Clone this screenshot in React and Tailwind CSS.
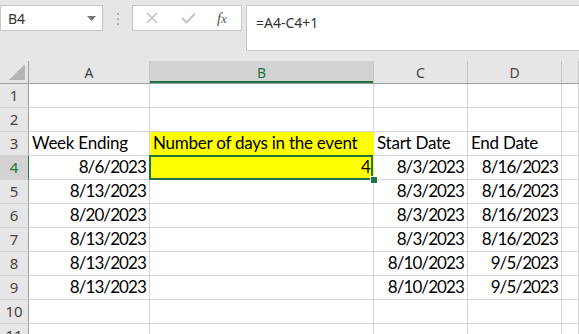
import React from "react";

const COLS = ["A", "B", "C", "D", ""];

const ROWS = [
  { n: 1 },
  { n: 2 },
  { n: 3, a: "Week Ending", b: "Number of days in the event", c: "Start Date", d: "End Date", text: true },
  { n: 4, a: "8/6/2023", b: "4", c: "8/3/2023", d: "8/16/2023" },
  { n: 5, a: "8/13/2023", c: "8/3/2023", d: "8/16/2023" },
  { n: 6, a: "8/20/2023", c: "8/3/2023", d: "8/16/2023" },
  { n: 7, a: "8/13/2023", c: "8/3/2023", d: "8/16/2023" },
  { n: 8, a: "8/13/2023", c: "8/10/2023", d: "9/5/2023" },
  { n: 9, a: "8/13/2023", c: "8/10/2023", d: "9/5/2023" },
  { n: 10 },
  { n: 11 },
];

const gridCols = "grid grid-cols-[29px_121px_224px_94px_94px_1fr]";
const cellFont = "font-['Lato','Liberation_Sans',sans-serif] text-[17px] leading-none text-black";
const uiFont = "font-['Noto_Sans','Open_Sans',sans-serif]";

function Cell({ value, right, yellow, selected }) {
  return (
    <div
      className={
        "relative flex h-[24px] items-end border-b border-r px-[3px] pb-[4px] " +
        cellFont +
        (right ? " justify-end tracking-[-0.9px]" : " justify-start tracking-[-0.25px]") +
        (yellow ? " border-[#ffff00] bg-[#ffff00]" : " border-[#d4d4d4] bg-white")
      }
    >
      <span className="whitespace-nowrap">{value}</span>
      {selected && (
        <>
          <div className="pointer-events-none absolute -top-[1px] -bottom-[1px] -left-[1px] right-0 z-10 border-2 border-[#217346]" />
          <div className="absolute left-[221px] top-[21px] z-20 h-[6px] w-[6px] border border-white bg-[#217346] box-content -translate-x-[1px] -translate-y-[1px]" />
        </>
      )}
    </div>
  );
}

export default function App() {
  return (
    <div className="h-[334px] w-[579px] overflow-hidden bg-[#e6e6e6]">
      {/* formula bar */}
      <div className="flex h-[61px] items-start pt-[5px]">
        <div className="flex h-[26px] w-[103px] items-center justify-between border border-[#c6c6c6] bg-white pl-[7px] pr-[6px]">
          <span className={uiFont + " text-[14px] text-[#333]"}>B4</span>
          <svg width="9" height="5" viewBox="0 0 9 5">
            <path d="M0 0 H9 L4.5 5 Z" fill="#777" />
          </svg>
        </div>
        <div className="ml-[14px] mt-[8px] flex flex-col gap-[3px]">
          <div className="h-[2px] w-[2px] bg-[#b0b0b0]" />
          <div className="h-[2px] w-[2px] bg-[#b0b0b0]" />
          <div className="h-[2px] w-[2px] bg-[#b0b0b0]" />
        </div>
        <div className="ml-[13px] flex h-[26px] w-[110px] items-center border border-[#c6c6c6] bg-white">
          <svg className="ml-[13px]" width="12" height="12" viewBox="0 0 12 12">
            <path d="M1 1 L11 11 M11 1 L1 11" stroke="#c4c4c4" strokeWidth="1.6" />
          </svg>
          <svg className="ml-[23px]" width="15" height="12" viewBox="0 0 15 12">
            <path d="M1 6 L5.5 10.5 L14 1.5" stroke="#c4c4c4" strokeWidth="2" fill="none" />
          </svg>
          <span className="ml-[21px] font-['Liberation_Serif',serif] text-[15px] italic text-[#555]">
            f<span className="text-[12px]">x</span>
          </span>
        </div>
        <div className="ml-[4px] h-[46px] flex-1 border border-r-0 border-[#c6c6c6] bg-white pl-[9px] pt-[4px]">
          <span className={uiFont + " text-[14px] text-[#333]"}>=A4-C4+1</span>
        </div>
      </div>

      {/* column headers */}
      <div className={gridCols + " h-[23px] border-b border-[#9f9f9f]"}>
        <div className="relative border-r border-[#9f9f9f]">
          <svg className="absolute left-[9px] top-[3px]" width="16" height="16" viewBox="0 0 16 16">
            <path d="M0 16 L16 16 L16 0 Z" fill="#b4b4b4" />
          </svg>
        </div>
        {COLS.map((c, i) => (
          <div
            key={i}
            className={
              "flex items-center justify-center border-r " +
              uiFont +
              " text-[14px] " +
              (c === "B"
                ? "border-[#c6c6c6] bg-[#d2d2d2] text-[#217346] shadow-[inset_0_-2px_0_#217346]"
                : "border-[#c6c6c6] text-[#444]")
            }
          >
            {c}
          </div>
        ))}
      </div>

      {/* rows */}
      {ROWS.map((r) => (
        <div key={r.n} className={gridCols}>
          <div
            className={
              "flex h-[24px] items-center justify-center border-b border-r border-b-[#d4d4d4] " +
              uiFont +
              " text-[15px] " +
              (r.n === 4
                ? "border-r-[#217346] bg-[#d2d2d2] text-[#217346]"
                : "border-r-[#9f9f9f] text-[#444]")
            }
          >
            {r.n}
          </div>
          <Cell value={r.a} right={!r.text} />
          <Cell value={r.b} right={!r.text} yellow={r.n === 3 || r.n === 4} selected={r.n === 4} />
          <Cell value={r.c} right={!r.text} />
          <Cell value={r.d} right={!r.text} />
          <Cell />
        </div>
      ))}
    </div>
  );
}
